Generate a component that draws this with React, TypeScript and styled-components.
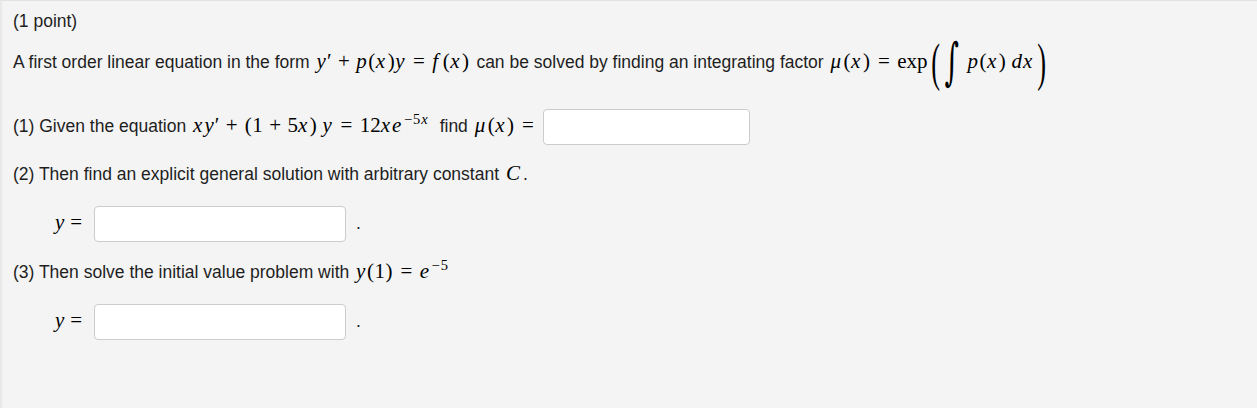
import styled, { createGlobalStyle } from "styled-components";

const GlobalStyle = createGlobalStyle`
  html, body {
    margin: 0;
    padding: 0;
    background: #ffffff;
  }
  body {
    font-family: "Liberation Sans", Arial, sans-serif;
  }
`;

// outer problem box
const Problem = styled.div`
  box-sizing: border-box;
  height: 408px;
  background: #f4f4f4;
  border-top: 1px solid #e2e2e2;
  border-left: 2px solid #e9e9e9;
  padding: 10px 0 0 11px;
  color: #1e1e1e;
  font-size: 17.5px;
`;

const Line = styled.div<{ $top: number; $h?: number; $indent?: number }>`
  margin-top: ${(p) => p.$top}px;
  height: ${(p) => p.$h ?? 20}px;
  line-height: ${(p) => p.$h ?? 20}px;
  padding-left: ${(p) => p.$indent ?? 0}px;
  white-space: nowrap;
`;

// math pieces (serif, a bit wider than plain Times to look like TeX)
const M = styled.span`
  font-family: "Liberation Serif", "DejaVu Serif", serif;
  font-size: 21px;
  color: #000;
  margin: 0 2px;
`;

const V = styled.i<{ $pad?: number }>`
  font-style: italic;
  padding-right: ${(p) => p.$pad ?? 1}px;
`;

const Paren = styled.span`
  padding: 0 0.5px;
`;

const Op = styled.span<{ $gap?: number }>`
  margin: 0 ${(p) => p.$gap ?? 6.5}px;
`;

const Sup = styled.span`
  font-size: 14.5px;
  letter-spacing: 1px;
  position: relative;
  top: -8px;
  margin: 0 3px 0 2px;
`;

const BigParen = styled.span`
  display: inline-block;
  font-size: 22px;
  line-height: 22px;
  transform: scale(1.2, 2.4);
  vertical-align: middle;
  margin: 0 4px;
`;

const Integral = styled.span`
  display: inline-block;
  font-family: "DejaVu Serif", serif;
  font-size: 22px;
  line-height: 22px;
  transform: scale(1.25, 2.3);
  vertical-align: middle;
  margin: 0 10px 0 3px;
`;

const Answer = styled.input<{ $w: number }>`
  box-sizing: border-box;
  width: ${(p) => p.$w}px;
  height: 36px;
  border: 1px solid #cccccc;
  border-radius: 4px;
  background: #ffffff;
  vertical-align: middle;
  padding: 4px 6px;
  outline: none;
`;

const Dot = styled.span`
  margin-left: 10px;
`;

function App() {
  return (
    <>
      <GlobalStyle />
      <Problem>
        <Line $top={0}>(1 point)</Line>

        <Line $top={4} $h={52}>
          A first order linear equation in the form{" "}
          <M>
            <V>y</V>′<Op>+</Op>
            <V>p</V>
            <Paren>(</Paren>
            <V $pad={2}>x</V>
            <Paren>)</Paren>
            <V>y</V>
            <Op $gap={7.5}>=</Op>
            <V $pad={4}>f</V>
            <Paren>(</Paren>
            <V $pad={2}>x</V>
            <Paren>)</Paren>
          </M>{" "}
          can be solved by finding an integrating factor{" "}
          <M>
            <V $pad={2}>μ</V>
            <Paren>(</Paren>
            <V $pad={2}>x</V>
            <Paren>)</Paren>
            <Op $gap={7.5}>=</Op>exp
            <BigParen>(</BigParen>
            <Integral>∫</Integral>
            <V>p</V>
            <Paren>(</Paren>
            <V $pad={2}>x</V>
            <Paren>)</Paren> <V>d</V>
            <V $pad={2}>x</V>
            <BigParen>)</BigParen>
          </M>
        </Line>

        <Line $top={20} $h={36}>
          (1) Given the equation{" "}
          <M>
            <V $pad={2}>x</V>
            <V>y</V>′<Op>+</Op>
            <Paren>(</Paren>1<Op>+</Op>5<V $pad={2}>x</V>
            <Paren>)</Paren> <V>y</V>
            <Op $gap={7.5}>=</Op>12<V $pad={2}>x</V>
            <V $pad={0.5}>e</V>
            <Sup>
              −5<V>x</V>
            </Sup>
          </M>{" "}
          find{" "}
          <M>
            <V $pad={2}>μ</V>
            <Paren>(</Paren>
            <V $pad={2}>x</V>
            <Paren>)</Paren>
            <Op $gap={7.5}>=</Op>
          </M>
          <Answer $w={207} />
        </Line>

        <Line $top={20}>
          (2) Then find an explicit general solution with arbitrary constant{" "}
          <M>
            <V>C</V>
          </M>
          .
        </Line>

        <Line $top={21} $h={36} $indent={40}>
          <M>
            <V>y</V>
            <Op $gap={5}>=</Op>
          </M>{" "}
          <Answer $w={252} />
          <Dot>.</Dot>
        </Line>

        <Line $top={21}>
          (3) Then solve the initial value problem with{" "}
          <M>
            <V>y</V>
            <Paren>(</Paren>1<Paren>)</Paren>
            <Op $gap={7.5}>=</Op>
            <V $pad={0.5}>e</V>
            <Sup>−5</Sup>
          </M>
        </Line>

        <Line $top={21} $h={36} $indent={40}>
          <M>
            <V>y</V>
            <Op $gap={5}>=</Op>
          </M>{" "}
          <Answer $w={252} />
          <Dot>.</Dot>
        </Line>
      </Problem>
    </>
  );
}

export default App;
